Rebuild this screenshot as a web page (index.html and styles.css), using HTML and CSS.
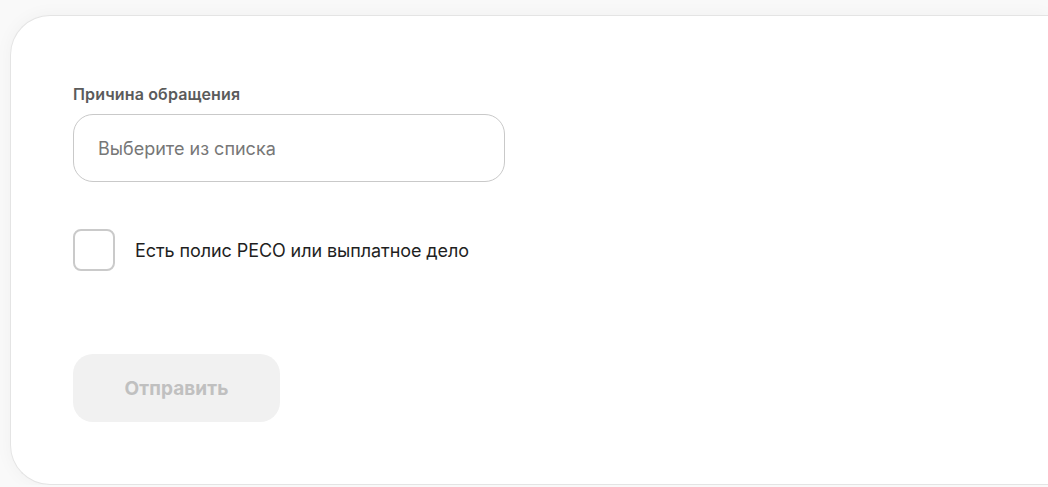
FILE: index.html
```html
<!DOCTYPE html>
<html lang="ru">
<head>
<meta charset="utf-8">
<link rel="stylesheet" href="styles.css">
</head>
<body>
<div class="card">
  <form class="form">
    <label class="field-label">Причина обращения</label>
    <div class="select">Выберите из списка</div>
    <label class="check-row">
      <span class="checkbox"></span>
      <span class="check-text">Есть полис РЕСО или выплатное дело</span>
    </label>
    <button type="button" class="submit" disabled>Отправить</button>
  </form>
</div>
</body>
</html>
```

FILE: styles.css
```css
html, body {
  margin: 0;
  padding: 0;
  background: #f9f9f9;
  font-family: Inter, "Noto Sans", "Liberation Sans", sans-serif;
}
body {
  padding: 15px 0 0 10px;
  overflow: hidden;
}
.card {
  background: #fff;
  border: 1px solid #e4e4e4;
  border-right: none;
  border-radius: 40px 0 0 40px;
  box-shadow: 0 0 18px rgba(0, 0, 0, 0.04);
  height: 470px;
  box-sizing: border-box;
  padding: 68px 0 0 62px;
}
.form {
  display: flex;
  flex-direction: column;
  align-items: flex-start;
}
.field-label {
  font-size: 16px;
  line-height: 20px;
  font-weight: 600;
  color: #5b5b5b;
  letter-spacing: 0.15px;
  margin-bottom: 10px;
}
.select {
  box-sizing: border-box;
  width: 432px;
  height: 68px;
  border: 1px solid #c9c9c9;
  border-radius: 20px;
  padding: 0 24px;
  display: flex;
  align-items: center;
  font-size: 18px;
  color: #777;
  letter-spacing: 0;
}
.check-row {
  display: flex;
  align-items: center;
  gap: 20px;
  margin-top: 47px;
}
.checkbox {
  box-sizing: border-box;
  width: 42px;
  height: 42px;
  border: 2px solid #cacaca;
  border-radius: 8px;
}
.check-text {
  font-size: 18px;
  color: #1f1f1f;
  letter-spacing: -0.08px;
}
.submit {
  margin-top: 83px;
  width: 207px;
  height: 68px;
  border: none;
  border-radius: 20px;
  background: #f1f1f1;
  color: #c0c0c0;
  font-family: inherit;
  font-size: 19px;
  font-weight: 700;
  letter-spacing: 0.1px;
}
```
